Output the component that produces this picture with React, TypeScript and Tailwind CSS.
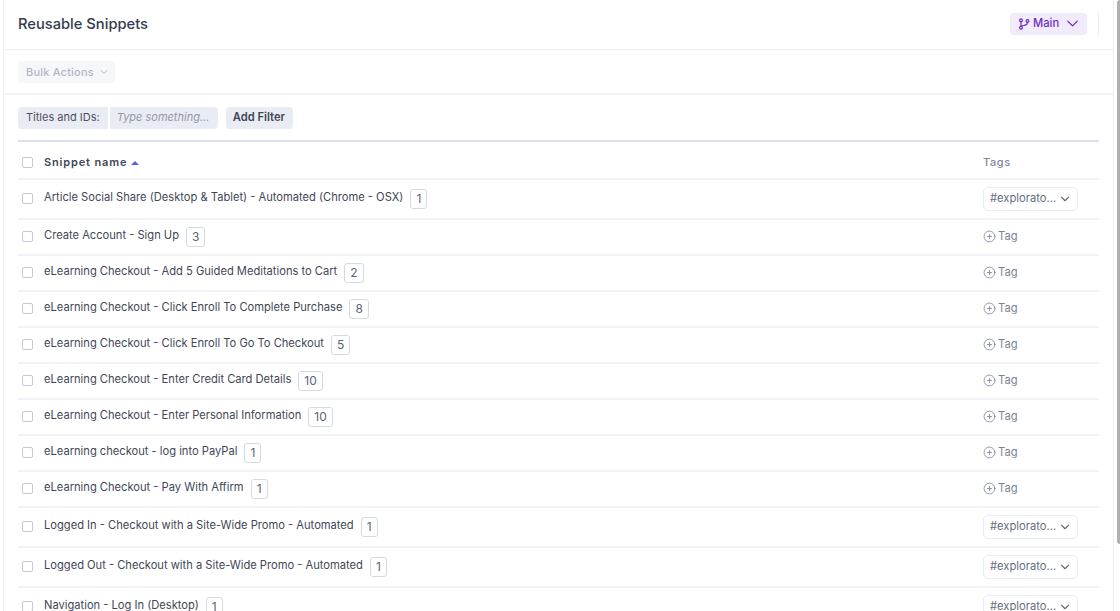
import { ChevronDown, CirclePlus } from 'lucide-react'

interface Snippet {
  name: string
  count: number
  tagged?: boolean
}

const snippets: Snippet[] = [
  { name: 'Article Social Share (Desktop & Tablet) - Automated (Chrome - OSX)', count: 1, tagged: true },
  { name: 'Create Account - Sign Up', count: 3 },
  { name: 'eLearning Checkout - Add 5 Guided Meditations to Cart', count: 2 },
  { name: 'eLearning Checkout - Click Enroll To Complete Purchase', count: 8 },
  { name: 'eLearning Checkout - Click Enroll To Go To Checkout', count: 5 },
  { name: 'eLearning Checkout - Enter Credit Card Details', count: 10 },
  { name: 'eLearning Checkout - Enter Personal Information', count: 10 },
  { name: 'eLearning checkout - log into PayPal', count: 1 },
  { name: 'eLearning Checkout - Pay With Affirm', count: 1 },
  { name: 'Logged In - Checkout with a Site-Wide Promo - Automated', count: 1, tagged: true },
  { name: 'Logged Out - Checkout with a Site-Wide Promo - Automated', count: 1, tagged: true },
  { name: 'Navigation - Log In (Desktop)', count: 1, tagged: true },
]

function BranchIcon() {
  return (
    <svg width="12" height="12" viewBox="0 0 24 24" fill="none" stroke="currentColor" strokeWidth="2.4" className="shrink-0">
      <circle cx="6" cy="4.5" r="2.8" />
      <circle cx="6" cy="19.5" r="2.8" />
      <circle cx="19" cy="6" r="2.8" />
      <path d="M6 7.5v9M19 9c0 4-4 5.5-8 6-2.5.3-5 1-5 2" />
    </svg>
  )
}

function Checkbox() {
  return <span className="mb-px ml-[4px] block h-[11px] w-[11px] shrink-0 rounded-[2px] border-[1.5px] border-[#c3c9d7] bg-white" />
}

function SnippetRow({ snippet }: { snippet: Snippet }) {
  return (
    <div
      className={`flex shrink-0 items-center border-b-2 border-[#f1f2f7] ${snippet.tagged ? 'h-[40px]' : 'h-[36px]'}`}
    >
      <Checkbox />
      <div className="ml-[11px] flex min-w-0 flex-1 items-center">
        <span className="mb-[3px] text-[11.15px] text-[#3f4757]">{snippet.name}</span>
        <span className="ml-[7px] flex h-[20px] min-w-[17px] items-center justify-center rounded-[3px] border border-[#d5d9e3] px-[5px] text-[12px] text-[#5b6375]">
          {snippet.count}
        </span>
      </div>
      <div className="mb-px w-[116px] shrink-0">
        {snippet.tagged ? (
          <div className="flex h-[24px] w-[95px] items-center justify-between rounded-[5px] border border-[#e9ecf3] pl-[6px] pr-[5px] text-[11.2px] text-[#656e80]">
            <span>#explorato...</span>
            <ChevronDown size={14} className="shrink-0 text-[#656e80]" />
          </div>
        ) : (
          <div className="flex items-center gap-[2px] text-[11.2px] text-[#7b8496]">
            <CirclePlus size={13} strokeWidth={1.5} className="shrink-0" />
            <span>Tag</span>
          </div>
        )}
      </div>
    </div>
  )
}

export default function App() {
  return (
    <div className="flex h-[611px] overflow-hidden bg-white font-['Inter',sans-serif]">
      <div className="ml-[3px] flex min-w-0 flex-1 flex-col border-x border-[#eceef3]">
        <header className="flex h-[50px] shrink-0 items-center justify-between border-b border-[#eceef3] pl-[14px] pr-[14px]">
          <h1 className="text-[14.7px] font-medium text-[#333b4d]">Reusable Snippets</h1>
          <div className="mb-[2px] flex items-center gap-[11px]">
            <button className="flex h-[22px] w-[77px] items-center rounded-[4px] bg-[#f2ebfb] pl-[8px] text-[11.2px] font-medium text-[#6d2fc0]">
              <BranchIcon />
              <span className="ml-[3px]">Main</span>
              <ChevronDown size={19} strokeWidth={1.7} className="ml-[4px]" />
            </button>
            <span className="h-[22px] w-px bg-[#eeeaf8]" />
          </div>
        </header>

        <div className="flex h-[45px] shrink-0 items-center border-b-2 border-[#f3f4f8] pl-[14px] pt-px">
          <button className="flex h-[22px] w-[97px] items-center rounded-[4px] bg-[#f6f7fa] pl-[8px] text-[11px] font-medium tracking-[0.2px] text-[#b1b7c4]">
            Bulk Actions
            <ChevronDown size={12} className="ml-[4px]" />
          </button>
        </div>

        <div className="flex h-[45px] shrink-0 items-center pl-[14px] text-[11px]">
          <span className="flex h-[22px] items-center rounded-l-[4px] bg-[#eaecf3] px-[8px] text-[#4a5263]">
            Titles and IDs:
          </span>
          <span className="ml-[2px] flex h-[22px] w-[108px] items-center rounded-r-[4px] bg-[#eaecf3] pl-[7px] italic text-[#9098a8]">
            Type something...
          </span>
          <button className="ml-[8px] flex h-[22px] items-center rounded-[4px] bg-[#eaecf3] pl-[7px] pr-[8px] text-[11.2px] font-semibold text-[#3f4757]">
            Add Filter
          </button>
        </div>

        <div className="ml-[14px] mr-[14px] flex min-h-0 flex-1 flex-col border-t-2 border-[#dcdfec]">
          <div className="flex h-[38px] shrink-0 items-center border-b-2 border-[#f1f2f7] pt-[5px]">
            <Checkbox />
            <div className="ml-[11px] flex flex-1 items-center">
              <span className="text-[11px] font-semibold tracking-[0.85px] text-[#3f4757]">Snippet name</span>
              <span className="ml-[4px] h-0 w-0 border-x-[4px] border-b-[4px] border-x-transparent border-b-[#5b5fe0]" />
            </div>
            <span className="w-[116px] shrink-0 text-[11px] font-medium tracking-[0.6px] text-[#8089a0]">Tags</span>
          </div>
          {snippets.map(s => (
            <SnippetRow key={s.name} snippet={s} />
          ))}
        </div>
      </div>

      {/* scrollbar */}
      <div className="flex w-[6px] shrink-0 justify-end bg-white">
        <div className="h-[544px] w-[3px] rounded-l-full bg-[#b0b0b0]" />
      </div>
    </div>
  )
}
